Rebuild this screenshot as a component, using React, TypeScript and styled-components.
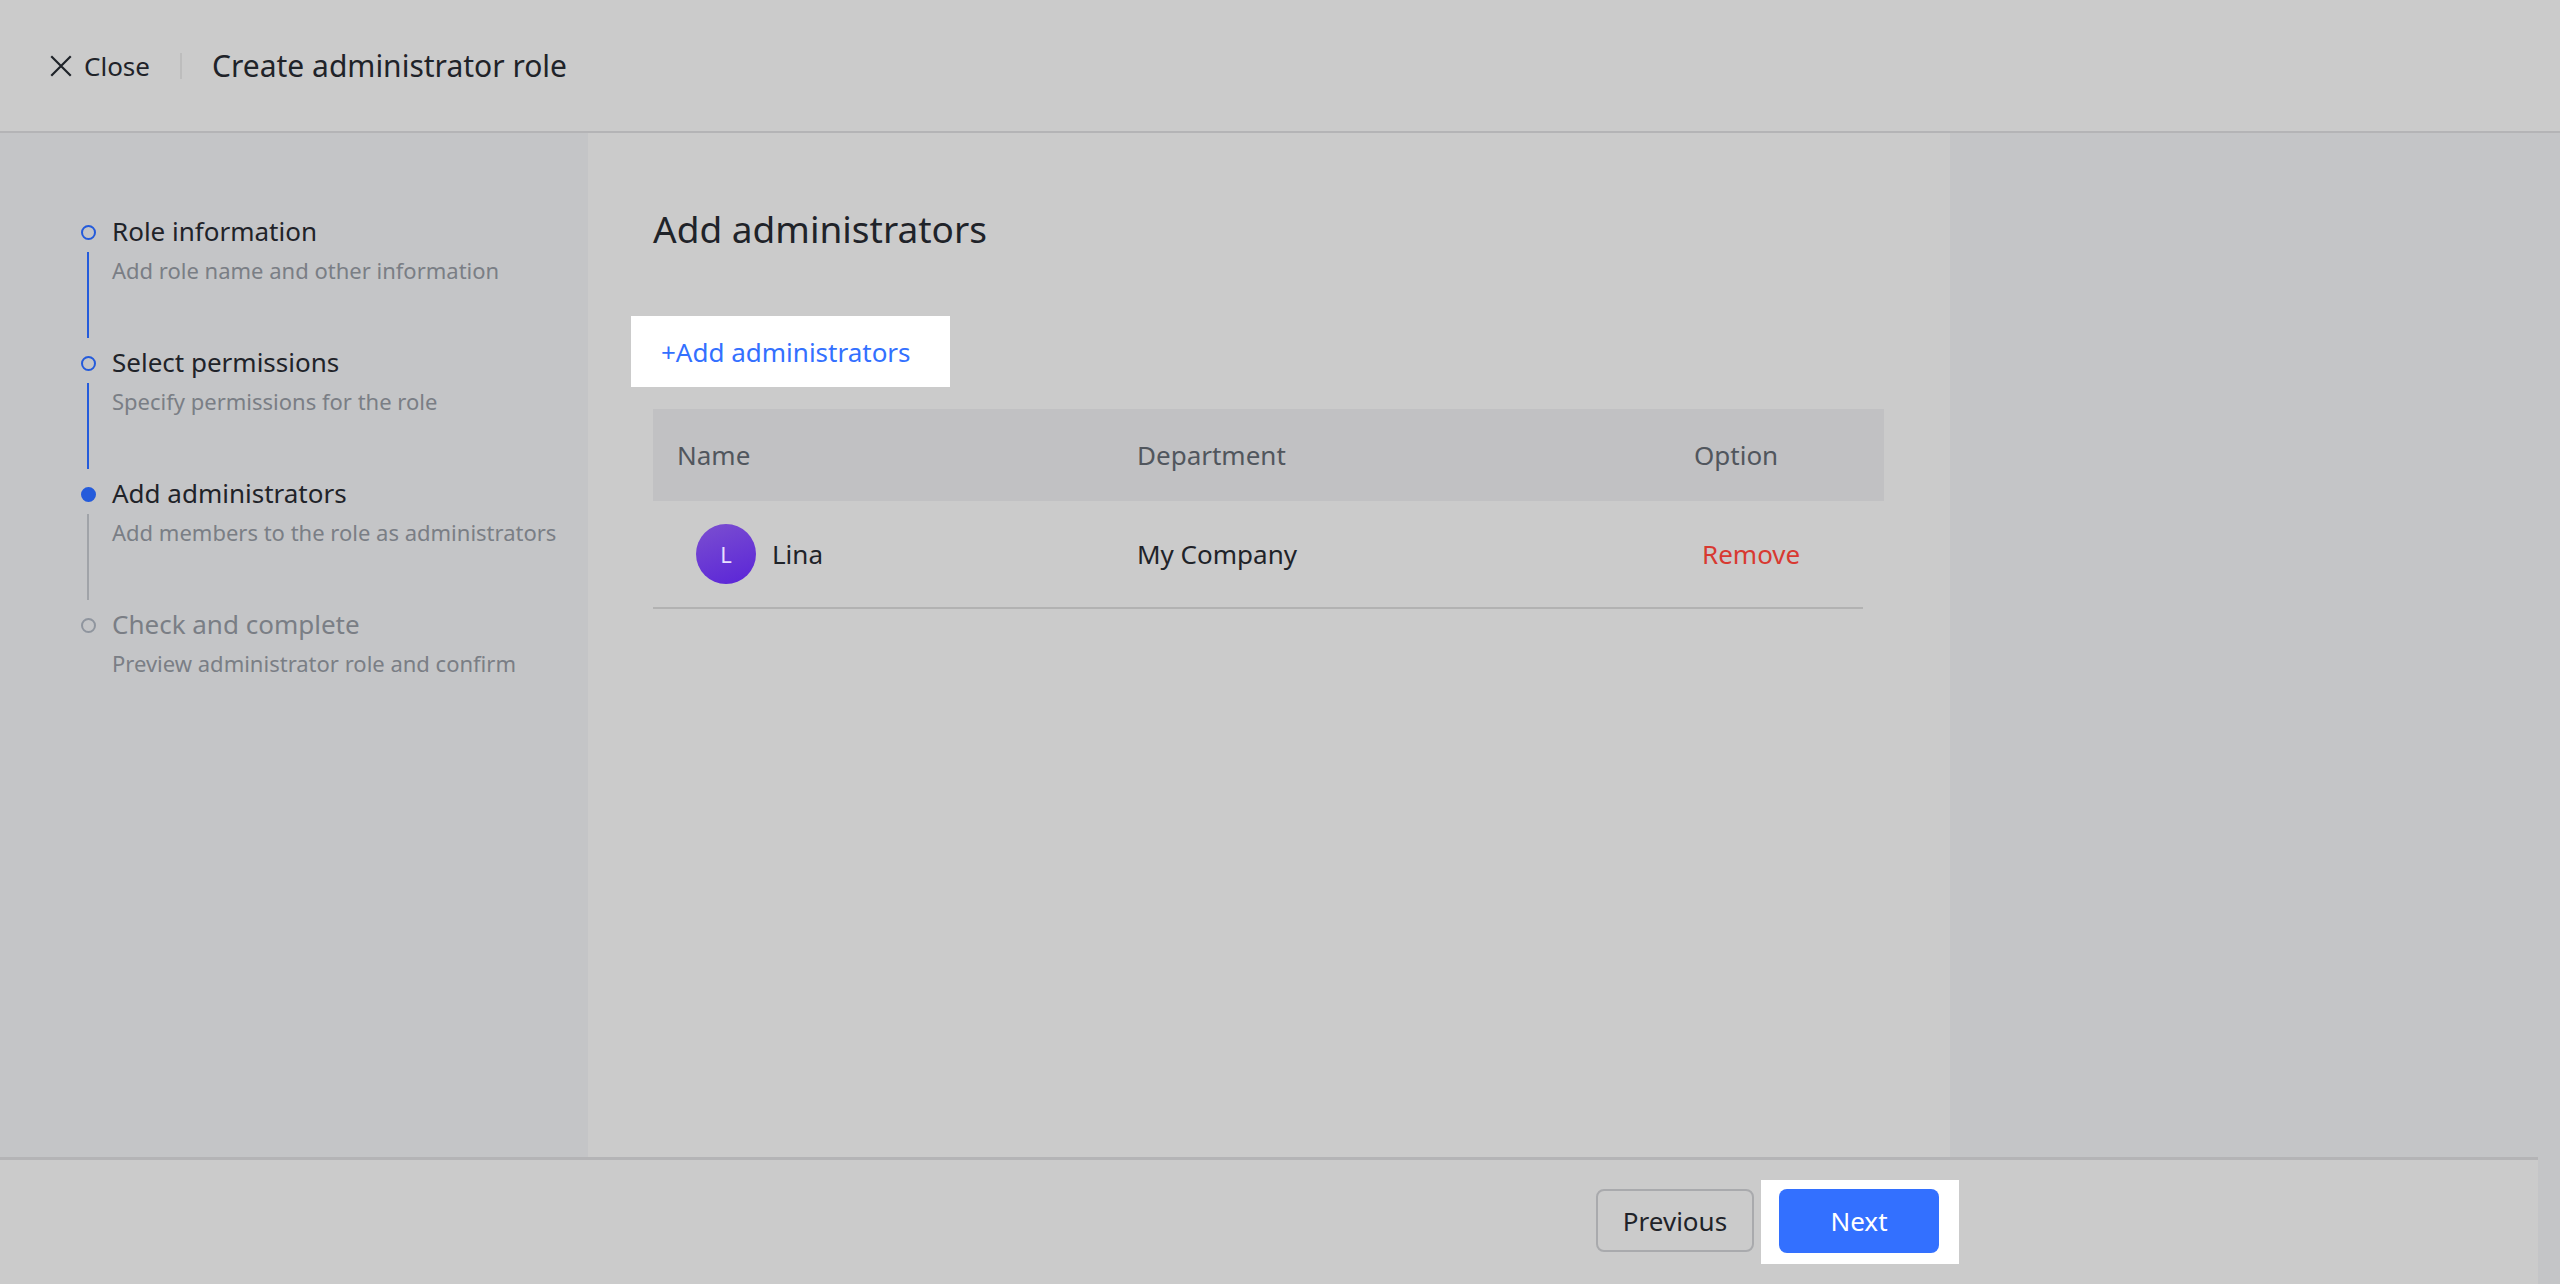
import React from "react";
import styled, { createGlobalStyle } from "styled-components";

const Global = createGlobalStyle`
  html, body { margin: 0; padding: 0; background: #c4c5c7; }
  body { font-family: "Noto Sans", "Open Sans", sans-serif; }
`;

const Page = styled.div`
  width: 2560px; height: 1284px; display: flex; flex-direction: column; background: #c4c5c7;
`;
const Header = styled.header`
  flex: none; background: #cbcbcb; border-bottom: 2px solid #b4b4b6;
  display: flex; align-items: center; padding-left: 48px; box-sizing: border-box; height: 133px;
`;
const CloseBtn = styled.div`
  display: flex; align-items: center; gap: 10px; font-size: 26px; color: #1f2329;
`;
const Divider = styled.div`
  width: 2px; height: 26px; background: #bdbdbd; margin: 0 30px 0 30px;
`;
const Title = styled.div`font-size: 30px; color: #1f2329;`;

const Body = styled.div`display: flex; height: 1024px; flex: none;`;
const Sidebar = styled.aside`
  width: 588px; flex: none; background: #c4c5c7; padding: 78px 0 0 79px; box-sizing: border-box;
`;
const Step = styled.div`display: grid; grid-template-columns: 18px 1fr; column-gap: 15px; height: 131px;`;
const Rail = styled.div`display: flex; flex-direction: column; align-items: center;`;
const Dot = styled.div<{ $state: "done" | "active" | "todo" }>`
  width: 15px; height: 15px; border-radius: 50%; box-sizing: border-box; margin-top: 14px; flex: none;
  border: 2px solid ${(p) => (p.$state === "todo" ? "#8f959e" : "#245bdb")};
  background: ${(p) => (p.$state === "active" ? "#245bdb" : "transparent")};
`;
const Line = styled.div<{ $blue: boolean }>`
  width: 2px; flex: 1; margin: 12px 0 4px; background: ${(p) => (p.$blue ? "#245bdb" : "#a0a3a8")};
`;
const StepTitle = styled.div<{ $muted: boolean }>`
  font-size: 26px; line-height: 40px; color: ${(p) => (p.$muted ? "#7a7e85" : "#1f2329")};
`;
const StepDesc = styled.div`font-size: 22px; line-height: 34px; color: #7a7e85; margin-top: 2px;`;

const Main = styled.main`
  width: 1362px; flex: none; background: #cbcbcb; padding: 0 0 0 65px; box-sizing: border-box;
  position: relative;
`;
const H1 = styled.h1`
  position: absolute; top: 70px; left: 65px; margin: 0; font-weight: 400; font-size: 37px; color: #1f2329;
`;
const AddBtn = styled.div`
  margin-left: -22px; width: 319px; height: 71px; background: #fff; display: flex; align-items: center;
  padding-left: 30px; box-sizing: border-box; color: #3370ff; font-size: 26px; margin-top: 183px;
`;
const Table = styled.div`width: 1231px; margin-top: 22px;`;
const HeadRow = styled.div`
  display: grid; grid-template-columns: 460px 557px 1fr; height: 92px; align-items: center;
  background: #c1c1c3; color: #51565d; font-size: 26px; padding-left: 24px; box-sizing: border-box;
`;
const BodyRow = styled.div`
  display: grid; grid-template-columns: 460px 557px 1fr; height: 108px; align-items: center;
  padding-left: 24px; box-sizing: border-box; width: 1210px; border-bottom: 2px solid #b2b2b2;
  font-size: 26px; color: #1f2329;
`;
const User = styled.div`display: flex; align-items: center; gap: 16px; padding-left: 19px;`;
const Avatar = styled.div`
  width: 60px; height: 60px; border-radius: 50%; background: linear-gradient(160deg, #7b4fd0, #5a24d8);
  color: #e8e0ff; font-size: 22px; display: flex; align-items: center; justify-content: center;
`;
const Remove = styled.div`color: #d83931; padding-left: 8px;`;

const Footer = styled.footer`
  width: 2538px; flex: 1; background: #cbcbcb; border-top: 3px solid #b4b4b6; box-sizing: border-box;
  display: flex; justify-content: flex-end; align-items: flex-start; padding: 29px 579px 0 0; gap: 7px;
`;
const Prev = styled.button`
  width: 158px; height: 63px; border: 2px solid #a9aaad; border-radius: 8px; background: transparent;
  font: inherit; font-size: 26px; color: #1f2329;
`;
const NextWrap = styled.div`
  background: #fff; padding: 9px 20px 11px 18px; margin-top: -9px;
`;
const Next = styled.button`
  width: 160px; height: 64px; border: none; border-radius: 8px; background: #3370ff; color: #fff;
  font: inherit; font-size: 26px;
`;

const steps: { t: string; d: string; s: "done" | "active" | "todo" }[] = [
  { t: "Role information", d: "Add role name and other information", s: "done" },
  { t: "Select permissions", d: "Specify permissions for the role", s: "done" },
  { t: "Add administrators", d: "Add members to the role as administrators", s: "active" },
  { t: "Check and complete", d: "Preview administrator role and confirm", s: "todo" },
];

export default function App() {
  return (
    <Page>
      <Global />
      <Header>
        <CloseBtn>
          <svg width="26" height="26" viewBox="0 0 24 24" fill="none" stroke="#1f2329" strokeWidth="2">
            <path d="M3 3l18 18M21 3L3 21" />
          </svg>
          Close
        </CloseBtn>
        <Divider />
        <Title>Create administrator role</Title>
      </Header>
      <Body>
        <Sidebar>
          {steps.map((s, i) => (
            <Step key={s.t}>
              <Rail>
                <Dot $state={s.s} />
                {i < steps.length - 1 && <Line $blue={s.s === "done"} />}
              </Rail>
              <div>
                <StepTitle $muted={s.s === "todo"}>{s.t}</StepTitle>
                <StepDesc>{s.d}</StepDesc>
              </div>
            </Step>
          ))}
        </Sidebar>
        <Main>
          <H1>Add administrators</H1>
          <AddBtn>+Add administrators</AddBtn>
          <Table>
            <HeadRow>
              <div>Name</div>
              <div>Department</div>
              <div>Option</div>
            </HeadRow>
            <BodyRow>
              <User>
                <Avatar>L</Avatar>
                Lina
              </User>
              <div>My Company</div>
              <Remove>Remove</Remove>
            </BodyRow>
          </Table>
        </Main>
      </Body>
      <Footer>
        <Prev>Previous</Prev>
        <NextWrap>
          <Next>Next</Next>
        </NextWrap>
      </Footer>
    </Page>
  );
}
